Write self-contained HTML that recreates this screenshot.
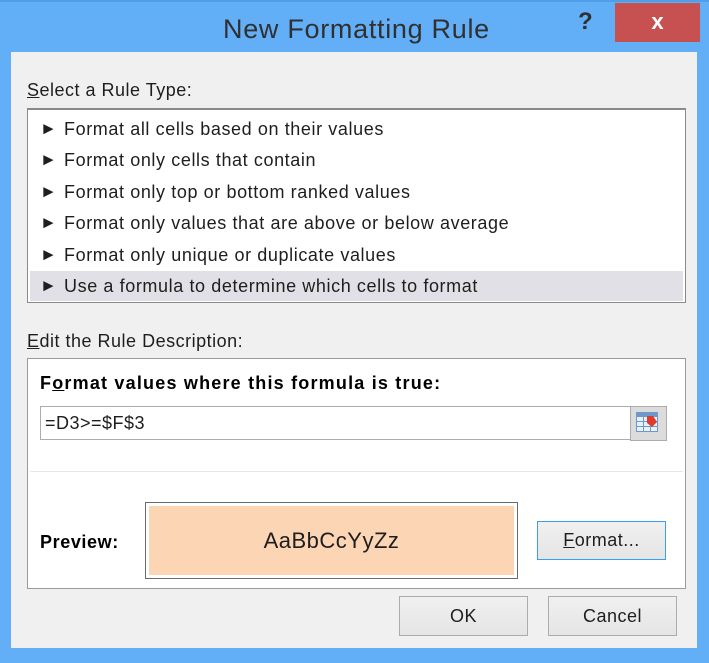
<html><head><style>
body{margin:0;width:709px;height:663px;background:#62aff7;font-family:"Liberation Sans",sans-serif;position:relative;overflow:hidden}
.a{position:absolute}
.t{font-size:18px;color:#1e1e1e;letter-spacing:0.5px}
.it{position:absolute;left:64px;font-size:18px;letter-spacing:0.6px;color:#1e1e1e}
.tri{position:absolute;left:40px;font-size:17px;color:#1e1e1e}
.btn{position:absolute;background:linear-gradient(#f0f0f0,#e5e5e5);border:1px solid #acacac;font-size:18px;letter-spacing:0.5px;text-align:center;color:#1e1e1e;box-sizing:border-box}
</style></head><body>
<div class="a" style="left:0;top:0;width:709px;height:2px;background:#4f9ee8"></div>
<div class="a" style="left:223px;top:14px;font-size:27px;letter-spacing:0.7px;color:#303030">New Formatting Rule</div>
<div class="a" style="left:578px;top:8px;font-size:24px;font-weight:bold;color:#303030">?</div>
<div class="a" style="left:615px;top:3px;width:85px;height:39px;background:#c75050;color:#fff;font-size:22px;font-weight:bold;text-align:center;line-height:38px">x</div>
<div class="a" style="left:11px;top:52px;width:686px;height:596px;background:#f0f0f0"></div>
<div class="a t" style="left:27px;top:80px"><u>S</u>elect a Rule Type:</div>
<div class="a" style="left:27px;top:108px;width:657px;height:192px;background:#fff;border:1px solid #8a8a8a;border-top:2px solid #8a8a8a"></div>
<div class="a" style="left:30px;top:271px;width:653px;height:30px;background:#e0e0e6"></div>
<div class="tri" style="top:119px">►</div><div class="it" style="top:119px">Format all cells based on their values</div>
<div class="tri" style="top:150px">►</div><div class="it" style="top:150px">Format only cells that contain</div>
<div class="tri" style="top:182px">►</div><div class="it" style="top:182px">Format only top or bottom ranked values</div>
<div class="tri" style="top:213px">►</div><div class="it" style="top:213px">Format only values that are above or below average</div>
<div class="tri" style="top:245px">►</div><div class="it" style="top:245px">Format only unique or duplicate values</div>
<div class="tri" style="top:276px">►</div><div class="it" style="top:276px">Use a formula to determine which cells to format</div>
<div class="a t" style="left:27px;top:331px"><u>E</u>dit the Rule Description:</div>
<div class="a" style="left:27px;top:358px;width:657px;height:229px;background:#fff;border:1px solid #9a9a9a"></div>
<div class="a" style="left:30px;top:471px;width:653px;height:1px;background:#e6e6e6"></div>
<div class="a" style="left:40px;top:373px;font-size:18px;letter-spacing:1.2px;font-weight:bold;color:#000">F<u>o</u>rmat values where this formula is true:</div>
<div class="a" style="left:40px;top:406px;width:589px;height:32px;border:1px solid #acacac;background:#fff"></div>
<div class="a t" style="left:45px;top:413px">=D3&gt;=$F$3</div>
<div class="a" style="left:630px;top:406px;width:35px;height:33px;border:1px solid #acacac;background:#dcdcdc"></div>
<svg class="a" style="left:635px;top:411px" width="25" height="23"><rect x="1" y="1" width="22" height="20" fill="#6d98c9"/><g fill="#e8f0fa"><rect x="2" y="6" width="6" height="4"/><rect x="9" y="6" width="6" height="4"/><rect x="16" y="6" width="6" height="4"/><rect x="2" y="11" width="6" height="4"/><rect x="9" y="11" width="6" height="4"/><rect x="16" y="11" width="6" height="4"/><rect x="2" y="16" width="6" height="4"/><rect x="9" y="16" width="6" height="4"/><rect x="16" y="16" width="6" height="4"/></g><path d="M12 5h6l4 6-5 5-5-4z" fill="#e03a2a"/></svg>
<div class="a" style="left:40px;top:532px;font-size:18px;letter-spacing:0.6px;font-weight:bold;color:#000">Preview:</div>
<div class="a" style="left:145px;top:502px;width:371px;height:75px;border:1px solid #6a6a6a;background:#fff"></div>
<div class="a" style="left:149px;top:506px;width:365px;height:69px;background:#fcd5b4"></div>
<div class="a" style="left:149px;top:528px;width:365px;text-align:center;font-size:22px;letter-spacing:0.5px;color:#1e1e1e">AaBbCcYyZz</div>
<div class="btn" style="left:537px;top:521px;width:129px;height:39px;line-height:37px;border:1px solid #3c9ef0"><u>F</u>ormat...</div>
<div class="btn" style="left:399px;top:596px;width:129px;height:40px;line-height:38px">OK</div>
<div class="btn" style="left:548px;top:596px;width:129px;height:40px;line-height:38px">Cancel</div>
</body></html>
